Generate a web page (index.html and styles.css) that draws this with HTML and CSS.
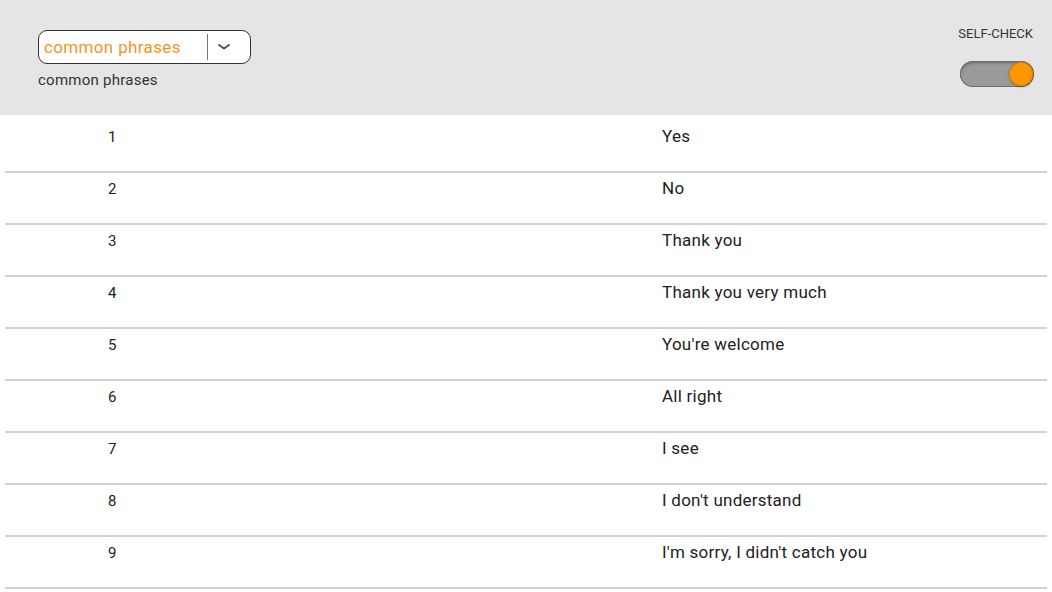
FILE: index.html
```html
<!DOCTYPE html>
<html lang="en">
<head>
    <meta charset="UTF-8">
    <meta name="viewport" content="width=device-width, initial-scale=1.0">
    <title>Common Phrases</title>
    <link rel="stylesheet" href="styles.css">
</head>
<body>
    <div class="header">
        <div class="picker">
            <div class="select">
                <span class="select-value">common phrases</span>
                <span class="select-sep"></span>
                <svg class="chevron" width="14" height="8" viewBox="0 0 14 8">
                    <path d="M2 2 L7 5.5 L12 2" fill="none" stroke="#555" stroke-width="2" stroke-linecap="round" stroke-linejoin="round"/>
                </svg>
            </div>
            <p class="picker-label">common phrases</p>
        </div>
        <div class="self-check">
            <p class="self-check-label">SELF-CHECK</p>
            <div class="toggle"><div class="knob"></div></div>
        </div>
    </div>
    <div class="list">
        <div class="row"><span class="num">1</span><span class="phrase">Yes</span></div>
        <div class="row"><span class="num">2</span><span class="phrase">No</span></div>
        <div class="row"><span class="num">3</span><span class="phrase">Thank you</span></div>
        <div class="row"><span class="num">4</span><span class="phrase">Thank you very much</span></div>
        <div class="row"><span class="num">5</span><span class="phrase">You're welcome</span></div>
        <div class="row"><span class="num">6</span><span class="phrase">All right</span></div>
        <div class="row"><span class="num">7</span><span class="phrase">I see</span></div>
        <div class="row"><span class="num">8</span><span class="phrase">I don't understand</span></div>
        <div class="row"><span class="num">9</span><span class="phrase">I'm sorry, I didn't catch you</span></div>
    </div>
</body>
</html>
```

FILE: styles.css
```css
body {
    font-family: Roboto, "Liberation Sans", sans-serif;
    margin: 0;
    background: #fff;
    color: #222;
    overflow: hidden;
}
.header {
    background: #e5e5e5;
    height: 115px;
    display: flex;
    justify-content: space-between;
    padding: 0 18px 0 38px;
}
.picker {
    padding-top: 30px;
}
.select {
    width: 211px;
    height: 32px;
    border: 1px solid #333;
    border-radius: 9px;
    background: #fff;
    display: flex;
    align-items: center;
}
.select-value {
    color: #f7941d;
    font-size: 17px;
    letter-spacing: 0.35px;
    padding-left: 5px;
    width: 163px;
}
.select-sep {
    width: 1px;
    height: 26px;
    background: #777;
}
.chevron {
    margin-left: 9px;
}
.picker-label {
    margin: 7px 0 0;
    font-size: 15px;
    letter-spacing: 0.25px;
    color: #333;
}
.self-check {
    padding-top: 26px;
    display: flex;
    flex-direction: column;
    align-items: flex-end;
}
.self-check-label {
    margin: 0 1px 0 0;
    font-size: 13px;
    color: #333;
}
.toggle {
    margin-top: 20px;
    width: 74px;
    height: 26px;
    border-radius: 13px;
    background: #9a9a9a;
    box-shadow: inset 0 0 0 1px #707070, inset 0 2px 3px rgba(0, 0, 0, 0.35);
    position: relative;
}
.knob {
    position: absolute;
    right: 1px;
    top: 1px;
    width: 24px;
    height: 24px;
    border-radius: 50%;
    background: #ff9800;
    box-shadow: inset 0 0 0 1px #d97a00, 0 1px 2px rgba(0, 0, 0, 0.3);
}
.list {
    padding: 6px 5px 0;
}
.row {
    height: 50px;
    border-bottom: 2px solid #d2d2d2;
    display: flex;
    align-items: flex-start;
}
.num {
    width: 657px;
    padding: 7px 0 0 103px;
    font-size: 15px;
    box-sizing: border-box;
}
.phrase {
    padding-top: 5px;
    font-size: 17px;
    letter-spacing: 0.25px;
}
```
